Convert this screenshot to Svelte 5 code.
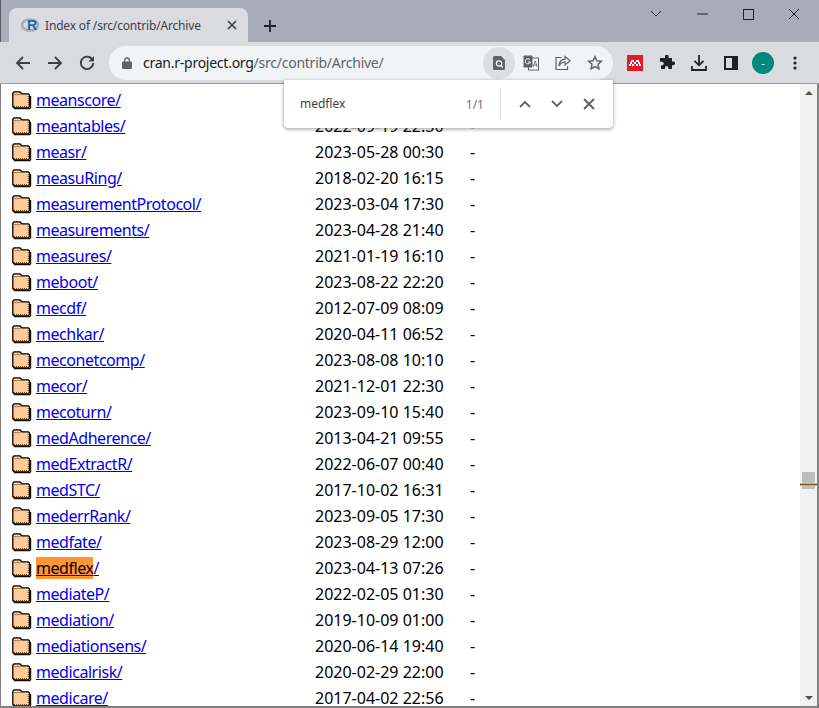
<script lang="ts">
  const rows = [
    ['meanscore/', '2022-06-21 10:15'],
    ['meantables/', '2022-09-19 22:30'],
    ['measr/', '2023-05-28 00:30'],
    ['measuRing/', '2018-02-20 16:15'],
    ['measurementProtocol/', '2023-03-04 17:30'],
    ['measurements/', '2023-04-28 21:40'],
    ['measures/', '2021-01-19 16:10'],
    ['meboot/', '2023-08-22 22:20'],
    ['mecdf/', '2012-07-09 08:09'],
    ['mechkar/', '2020-04-11 06:52'],
    ['meconetcomp/', '2023-08-08 10:10'],
    ['mecor/', '2021-12-01 22:30'],
    ['mecoturn/', '2023-09-10 15:40'],
    ['medAdherence/', '2013-04-21 09:55'],
    ['medExtractR/', '2022-06-07 00:40'],
    ['medSTC/', '2017-10-02 16:31'],
    ['mederrRank/', '2023-09-05 17:30'],
    ['medfate/', '2023-08-29 12:00'],
    ['medflex/', '2023-04-13 07:26'],
    ['mediateP/', '2022-02-05 01:30'],
    ['mediation/', '2019-10-09 01:00'],
    ['mediationsens/', '2020-06-14 19:40'],
    ['medicalrisk/', '2020-02-29 22:00'],
    ['medicare/', '2017-04-02 22:56']
  ];

  // white blocks of the red extension badge
  const badge = [
    [4, 5, 3], [9, 5, 3],
    [3, 7, 2], [7, 7, 2], [11, 7, 2],
    [2, 9, 2], [5, 9, 2], [9, 9, 2], [12, 9, 2]
  ];
</script>

<div class="window">
  <div class="titlebar">
    <div class="tab">
      <span class="favicon">
        <svg width="20" height="16" viewBox="0 0 20 16">
          <ellipse cx="9" cy="7" rx="8" ry="5.5" fill="none" stroke="#a9acb3" stroke-width="2.6" />
        </svg>
        <b>R</b>
      </span>
      <span class="tab-title">Index of /src/contrib/Archive</span>
      <svg class="tab-close" width="10" height="10" viewBox="0 0 10 10">
        <path d="M1 1l8 8M9 1l-8 8" stroke="#3c4043" stroke-width="1.6" />
      </svg>
    </div>
    <svg class="new-tab" width="14" height="14" viewBox="0 0 14 14">
      <path d="M7 1v12M1 7h12" stroke="#202124" stroke-width="1.8" />
    </svg>
    <div class="controls">
      <span class="ctl">
        <svg width="12" height="8" viewBox="0 0 12 8"><path d="M1 1l5 5 5-5" fill="none" stroke="#202124" /></svg>
      </span>
      <span class="ctl">
        <svg width="11" height="2" viewBox="0 0 11 2"><path d="M0 1h11" stroke="#202124" /></svg>
      </span>
      <span class="ctl">
        <svg width="11" height="11" viewBox="0 0 11 11"><rect x=".5" y=".5" width="10" height="10" fill="none" stroke="#202124" /></svg>
      </span>
      <span class="ctl">
        <svg width="12" height="12" viewBox="0 0 12 12"><path d="M1 1l10 10M11 1L1 11" stroke="#202124" /></svg>
      </span>
    </div>
  </div>

  <div class="toolbar">
    <span class="btn">
      <svg width="16" height="16" viewBox="0 0 16 16"><path d="M15 8H2M8 2L2 8l6 6" fill="none" stroke="#3c4043" stroke-width="1.8" /></svg>
    </span>
    <span class="btn">
      <svg width="16" height="16" viewBox="0 0 16 16"><path d="M1 8h13M8 2l6 6-6 6" fill="none" stroke="#3c4043" stroke-width="1.8" /></svg>
    </span>
    <span class="btn">
      <svg width="16" height="16" viewBox="0 0 16 16">
        <path d="M13.6 5.2A6.2 6.2 0 1 0 14.2 8" fill="none" stroke="#3c4043" stroke-width="1.8" />
        <path d="M15 1v5.6H9.4z" fill="#3c4043" />
      </svg>
    </span>
    <div class="omnibox">
      <svg class="lock" width="10" height="12" viewBox="0 0 10 12">
        <path d="M2.6 5V3.4a2.4 2.4 0 0 1 4.8 0V5" fill="none" stroke="#5f6368" stroke-width="1.3" />
        <rect y="4.6" width="10" height="7.4" rx="1" fill="#5f6368" />
      </svg>
      <span class="url">cran.r-project.org<span class="path">/src/contrib/Archive/</span></span>
      <span class="btn active">
        <svg width="12" height="14" viewBox="0 0 12 14">
          <path d="M1.5 0H8l4 4v8.500a1.500 1.500 0 0 1-1.500 1.500h-9A1.500 1.500 0 0 1 0 12.500v-11A1.500 1.500 0 0 1 1.500 0z" fill="#5f6368" />
          <circle cx="6" cy="7.500" r="2.700" fill="none" stroke="#fff" stroke-width="1.200" />
          <path d="M8 9.500l1.800 1.800" stroke="#fff" stroke-width="1.200" />
        </svg>
      </span>
      <span class="btn">
        <svg width="16" height="16" viewBox="0 0 16 16">
          <rect x="5.500" y="3" width="10" height="12" fill="#fff" stroke="#5f6368" />
          <rect x=".5" y=".5" width="9" height="12" rx="1" fill="#5f6368" />
          <path d="M7 4.800A2.600 2.600 0 1 0 7.400 7H5" stroke="#fff" fill="none" />
          <path d="M10 12l2.300-6 2 6M11 10h2.500" stroke="#5f6368" fill="none" stroke-width=".9" />
        </svg>
      </span>
      <span class="btn">
        <svg width="16" height="16" viewBox="0 0 16 16">
          <path d="M6.500 2.500H1v12h11.500V11" fill="none" stroke="#5f6368" stroke-width="1.200" />
          <path d="M10 1.500l5 4.200-5 4.200V7.200C7 7.200 5.200 8.500 4 11c.2-4 2.500-6.600 6-6.800z" fill="none" stroke="#5f6368" stroke-width="1.200" />
        </svg>
      </span>
      <span class="btn">
        <svg width="16" height="16" viewBox="0 0 16 16">
          <path d="M8 1.800l1.900 4 4.400.5-3.300 3 .9 4.400L8 11.500l-3.900 2.200.9-4.400-3.300-3 4.400-.5z" fill="none" stroke="#5f6368" stroke-width="1.500" />
        </svg>
      </span>
    </div>
    <div class="extensions">
      <span class="btn">
        <svg width="16" height="16" viewBox="0 0 16 16" shape-rendering="crispEdges">
          <rect width="16" height="16" fill="#e6192c" />
          {#each badge as [x, y, w]}
            <rect {x} {y} width={w} height="2" fill="#fff" />
          {/each}
        </svg>
      </span>
      <span class="btn">
        <svg width="16" height="16" viewBox="0 0 16 16">
          <path d="M6 1.500a1.800 1.800 0 0 1 3.600 0V3h3.400v3.400h1.200a1.900 1.900 0 0 1 0 3.800H13V14H9.400v-1.200a1.700 1.700 0 0 0-3.400 0V14H2v-3.600h1a1.800 1.800 0 0 0 0-3.600H1V3h5z" fill="#202124" />
        </svg>
      </span>
      <span class="btn">
        <svg width="16" height="16" viewBox="0 0 16 16">
          <path d="M8 0v10M3.500 5.800L8 10.300l4.500-4.500M1 11v4h14v-4" fill="none" stroke="#202124" stroke-width="1.800" />
        </svg>
      </span>
      <span class="btn">
        <svg width="14" height="14" viewBox="0 0 14 14">
          <rect x="1" y="1" width="12" height="12" fill="none" stroke="#202124" stroke-width="2" />
          <rect x="8" y="1" width="5" height="12" fill="#202124" />
        </svg>
      </span>
      <span class="btn"><span class="avatar">-</span></span>
      <span class="btn">
        <svg width="4" height="14" viewBox="0 0 4 14">
          <circle cx="2" cy="2" r="1.600" fill="#202124" /><circle cx="2" cy="7" r="1.600" fill="#202124" /><circle cx="2" cy="12" r="1.600" fill="#202124" />
        </svg>
      </span>
    </div>
  </div>

  <div class="viewport">
    <div class="page">
      {#each rows as [name, date]}
        <div class="row">
          <svg class="folder" width="20" height="20" viewBox="0 0 20 20">
            <path d="M2 19.200h16l1.200-1.200V6H18v12H2z" fill="#111" />
            <path d="M.8 16.500V3.200L2.200 1.800h5.600L9.800 3.800h6.400L17.500 5v11.500L16.500 17.800H2z" fill="#ffcc99" stroke="#000" stroke-width="1.300" stroke-linejoin="round" />
            <path d="M2 16.500h14.500" stroke="#7a4d1d" stroke-dasharray="1 1" />
            <path d="M16.300 6v10" stroke="#7a4d1d" stroke-dasharray="1 1" />
            <path d="M1.800 4.600h7" stroke="#8a6a46" stroke-width=".8" />
          </svg>
          <span class="name">
            <a href="#top">
              {#if name === 'medflex/'}<mark>medflex</mark>/{:else}{name}{/if}
            </a>
          </span>
          <span class="date">{date}</span>
          <span class="size">-</span>
        </div>
      {/each}
    </div>

    <div class="scrollbar">
      <span class="arrow up"></span>
      <div class="track">
        <div class="thumb"></div>
        <div class="tick"></div>
      </div>
      <span class="arrow down"></span>
    </div>

    <div class="findbar">
      <span class="query">medflex</span>
      <span class="count">1/1</span>
      <span class="divider"></span>
      <svg class="find-btn" width="12" height="8" viewBox="0 0 12 8"><path d="M1 7l5-5 5 5" fill="none" stroke="#5f6368" stroke-width="1.800" /></svg>
      <svg class="find-btn" width="12" height="8" viewBox="0 0 12 8"><path d="M1 1l5 5 5-5" fill="none" stroke="#5f6368" stroke-width="1.800" /></svg>
      <svg class="find-btn last" width="12" height="12" viewBox="0 0 12 12"><path d="M1 1l10 10M11 1L1 11" stroke="#5f6368" stroke-width="2" /></svg>
    </div>
  </div>
</div>

<style>
  :global(body) {
    margin: 0;
    background: #fff;
  }

  .window {
    width: 819px;
    height: 708px;
    display: flex;
    flex-direction: column;
    overflow: hidden;
    font-family: "Noto Sans", "Open Sans", sans-serif;
    color: #202124;
  }

  .titlebar {
    height: 42px;
    flex: none;
    box-sizing: border-box;
    padding: 8px 0 0 9px;
    display: flex;
    background: #a8abb8;
    border-left: 1px solid #5a5c63;
  }

  .tab {
    width: 239px;
    height: 34px;
    box-sizing: border-box;
    display: flex;
    align-items: center;
    padding: 0 11px 0 12px;
    background: #d9dbe1;
    border-radius: 8px 8px 0 0;
    margin-left: -1px;
  }

  .favicon {
    position: relative;
    width: 20px;
    height: 16px;
    flex: none;
  }

  .favicon b {
    position: absolute;
    left: 6px;
    top: 0;
    font: bold 14px/17px "Liberation Sans", sans-serif;
    color: #1f65b7;
  }

  .tab-title {
    margin-left: 4px;
    flex: 1;
    font-size: 12px;
    letter-spacing: -0.17px;
    color: #3c4043;
    white-space: nowrap;
  }

  .tab-close {
    flex: none;
  }

  .new-tab {
    margin: 11px 0 0 15px;
  }

  .controls {
    margin-left: auto;
    display: flex;
    margin-top: -8px;
    height: 28px;
    padding-right: 2px;
  }

  .ctl {
    width: 46px;
    display: flex;
    align-items: center;
    justify-content: center;
  }

  .toolbar {
    height: 42px;
    flex: none;
    box-sizing: border-box;
    display: flex;
    align-items: center;
    padding: 0 8px 0 7px;
    background: #d9dbe1;
    border-bottom: 1px solid #9b9da3;
  }

  .btn {
    width: 32px;
    height: 32px;
    flex: none;
    display: flex;
    align-items: center;
    justify-content: center;
  }

  .omnibox {
    width: 504px;
    height: 34px;
    margin-left: 6px;
    box-sizing: border-box;
    padding-right: 2px;
    display: flex;
    align-items: center;
    background: #f1f3f4;
    border-radius: 17px;
  }

  .lock {
    margin-left: 13px;
    flex: none;
  }

  .url {
    margin-left: 11px;
    flex: 1;
    font-size: 14px;
    letter-spacing: -0.25px;
    color: #202124;
    white-space: nowrap;
  }

  .path {
    color: #5f6368;
  }

  .btn.active {
    background: #dcdee1;
    border-radius: 50%;
  }

  .extensions {
    margin-left: 6px;
    display: flex;
  }

  .avatar {
    width: 22px;
    height: 22px;
    border-radius: 50%;
    background: #00897b;
    color: #fff;
    font-size: 10px;
    line-height: 22px;
    text-align: center;
  }

  .viewport {
    position: relative;
    flex: 1;
    min-height: 0;
    display: flex;
    background: #fff;
    border-left: 1px solid #808080;
    border-right: 2px solid #808080;
    border-bottom: 2px solid #808080;
  }

  .page {
    flex: 1;
    min-width: 0;
    overflow: hidden;
    padding-top: 3px;
  }

  .row {
    height: 26px;
    display: grid;
    grid-template-columns: 24px 11px 279px 155px 1fr;
    align-items: center;
    font-size: 16px;
    color: #000;
    white-space: nowrap;
  }

  .folder {
    grid-column: 2 / 3;
    margin-left: -13px;
  }

  .name {
    grid-column: 3;
    letter-spacing: -0.45px;
  }

  .name a {
    color: #0000ee;
    text-decoration: underline;
  }

  mark {
    background: #ff9632;
    color: #000;
  }

  .scrollbar {
    width: 17px;
    flex: none;
    display: flex;
    flex-direction: column;
    background: #f1f1f1;
  }

  .arrow {
    height: 17px;
    flex: none;
    display: flex;
    align-items: center;
    justify-content: center;
  }

  .arrow::before {
    content: '';
    border-left: 4px solid transparent;
    border-right: 4px solid transparent;
  }

  .arrow.up::before {
    border-bottom: 4px solid #505050;
  }

  .arrow.down::before {
    border-top: 4px solid #505050;
  }

  .track {
    position: relative;
    flex: 1;
  }

  .thumb {
    position: absolute;
    left: 2px;
    right: 2px;
    top: 371px;
    height: 17px;
    background: #bdbdbd;
  }

  .tick {
    position: absolute;
    left: 0;
    right: 0;
    top: 382px;
    height: 3px;
    box-sizing: border-box;
    background: #6b5200;
    border-top: 1px solid #ffb900;
    border-bottom: 1px solid #ffb900;
  }

  .findbar {
    position: absolute;
    top: -4px;
    left: 283px;
    width: 329px;
    height: 48px;
    box-sizing: border-box;
    display: flex;
    align-items: center;
    padding-left: 16px;
    background: #fff;
    border-radius: 0 0 4px 4px;
    box-shadow: 0 1px 3px 1px rgba(60, 64, 67, 0.35);
  }

  .query {
    flex: 1;
    font-size: 12px;
    line-height: 14px;
    margin-top: -1px;
    color: #3c4043;
  }

  .count {
    font-size: 12px;
    color: #70757a;
  }

  .divider {
    width: 1px;
    height: 32px;
    margin: 0 18px 0 16px;
    background: #dadce0;
  }

  .find-btn {
    flex: none;
    margin-right: 20px;
  }

  .find-btn.last {
    margin-right: 18px;
  }
</style>
